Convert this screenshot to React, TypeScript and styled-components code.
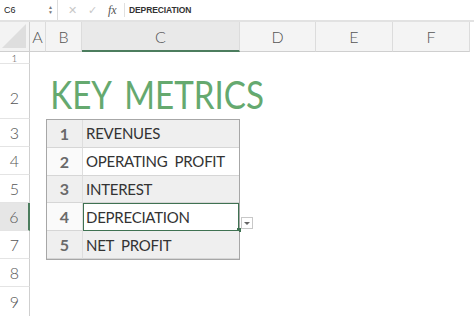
import React from 'react';
import styled, { createGlobalStyle } from 'styled-components';

const GlobalStyle = createGlobalStyle`
  html, body {
    margin: 0;
    padding: 0;
    background: #fff;
    overflow: hidden;
  }
  body {
    font-family: Lato, 'Liberation Sans', Arial, sans-serif;
  }
`;

const metrics = ['REVENUES', 'OPERATING  PROFIT', 'INTEREST', 'DEPRECIATION', 'NET  PROFIT'];
const columns = ['A', 'B', 'C', 'D', 'E', 'F'];
const rows = ['1', '2', '3', '4', '5', '6', '7', '8', '9'];

const Window = styled.div`
  width: 474px;
  height: 316px;
  overflow: hidden;
  background: #fff;
`;

const FormulaBar = styled.div`
  display: flex;
  align-items: center;
  height: 20px;
  border-bottom: 2px solid #e2e2e2;
  background: #fff;
  font-size: 10px;
  color: #222;
`;

const NameBox = styled.div`
  display: flex;
  align-items: center;
  justify-content: space-between;
  width: 49px;
  padding: 0 4px;
  height: 100%;
  border-right: 1px solid #dcdcdc;
  font-family: 'Liberation Sans', Arial, sans-serif;
  font-size: 9px;
`;

const Spinner = styled.div`
  display: flex;
  flex-direction: column;
  font-size: 5px;
  line-height: 5px;
  color: #777;
`;

const BarIcon = styled.span<{ $muted?: boolean }>`
  width: 20px;
  text-align: center;
  color: ${(p) => (p.$muted ? '#c8c8c8' : '#444')};
  font-size: 11px;
`;

const Fx = styled.span`
  width: 16px;
  padding-left: 6px;
  margin-right: 4px;
  font-family: 'Liberation Serif', 'Times New Roman', serif;
  font-style: italic;
  font-size: 12px;
  color: #555;
  border-right: 1px solid #e0e0e0;
  line-height: 14px;
`;

const FormulaText = styled.span`
  font-family: 'Liberation Sans', Arial, sans-serif;
  font-size: 8.5px;
  font-weight: 700;
  color: #333;
  letter-spacing: -0.1px;
`;

const Sheet = styled.div`
  display: grid;
  grid-template-columns: 30px 16px 36px 158px 76px 77px 77px;
  grid-template-rows: 30px 12px 55px 28px 28px 28px 28px 28px 28px 30px;
`;

const Corner = styled.div`
  position: relative;
  background: #f3f3f3;
  border-right: 1px solid #cfcfcf;
  border-bottom: 1px solid #cfcfcf;
  overflow: hidden;

  &::after {
    content: '';
    position: absolute;
    right: 3px;
    bottom: 3px;
    width: 0;
    height: 0;
    border-left: 24px solid transparent;
    border-bottom: 24px solid #dedede;
  }
`;

const ColHead = styled.div<{ $active?: boolean }>`
  display: flex;
  align-items: center;
  justify-content: center;
  background: ${(p) => (p.$active ? '#e9e9e9' : '#f4f4f4')};
  border-right: 1px solid #dcdcdc;
  border-bottom: ${(p) => (p.$active ? '2px solid #4c7d5e' : '1px solid #cfcfcf')};
  color: #555;
  font-size: 16px;
  font-weight: 300;
`;

const RowHead = styled.div<{ $active?: boolean; $short?: boolean; $tall?: boolean }>`
  grid-column: 1;
  display: flex;
  align-items: center;
  justify-content: center;
  box-sizing: border-box;
  background: ${(p) => (p.$active ? '#e6e6e6' : '#fff')};
  border-right: ${(p) => (p.$active ? '2px solid #4c7d5e' : '1px solid #cfcfcf')};
  border-bottom: 1px solid #e4e4e4;
  color: #555;
  font-size: ${(p) => (p.$short ? '10px' : '16px')};
  font-weight: 300;
  line-height: ${(p) => (p.$short ? '10px' : '18px')};
  padding-top: ${(p) => (p.$tall ? '14px' : '0')};
`;

const Title = styled.div`
  grid-column: 3 / 8;
  grid-row: 3;
  display: flex;
  align-items: flex-end;
  padding: 0 0 5px 5px;
  color: #65a96f;
  font-size: 39px;
  font-weight: 400;
  word-spacing: 6px;
  line-height: 40px;
  white-space: nowrap;
  transform: scaleX(0.85);
  transform-origin: left bottom;
`;

const Table = styled.div`
  grid-column: 3 / 5;
  grid-row: 4 / 9;
  display: grid;
  grid-template-columns: 36px 1fr;
  grid-auto-rows: 1fr;
  border: 1px solid #a7a7a7;
  margin-bottom: -1px;
`;

const NumCell = styled.div<{ $band: boolean }>`
  display: flex;
  align-items: center;
  justify-content: center;
  background: ${(p) => (p.$band ? '#efefef' : '#fafafa')};
  border-right: 1px solid #dedede;
  border-bottom: 1px solid #d6d6d6;
  color: #6a6a6a;
  font-size: 16px;
  font-weight: 700;
`;

const TextCell = styled.div<{ $band: boolean; $selected?: boolean }>`
  position: relative;
  display: flex;
  align-items: center;
  padding-left: 3px;
  background: ${(p) => (p.$band ? '#efefef' : '#fff')};
  border-bottom: 1px solid #d6d6d6;
  color: #333;
  font-size: 15px;
  letter-spacing: -0.25px;
  white-space: pre;
  outline: ${(p) => (p.$selected ? '1.5px solid #3f7252' : 'none')};
  outline-offset: -1px;
`;

const FillHandle = styled.span`
  position: absolute;
  right: -2px;
  bottom: -2px;
  width: 4px;
  height: 4px;
  background: #3f7252;
`;

const DropButton = styled.span`
  position: absolute;
  right: -14px;
  bottom: 1px;
  width: 10px;
  height: 10px;
  border: 1px solid #c8c8c8;
  background: #fff;
  display: flex;
  align-items: center;
  justify-content: center;

  &::after {
    content: '';
    border-left: 3px solid transparent;
    border-right: 3px solid transparent;
    border-top: 3px solid #666;
  }
`;

export default function App() {
  return (
    <Window>
      <GlobalStyle />
      <FormulaBar>
        <NameBox>
          <span>C6</span>
          <Spinner>
            <span>▲</span>
            <span>▼</span>
          </Spinner>
        </NameBox>
        <BarIcon $muted style={{ marginLeft: 4 }}>✕</BarIcon>
        <BarIcon $muted>✓</BarIcon>
        <Fx>fx</Fx>
        <FormulaText>DEPRECIATION</FormulaText>
      </FormulaBar>
      <Sheet>
        <Corner />
        {columns.map((c) => (
          <ColHead key={c} $active={c === 'C'}>
            {c}
          </ColHead>
        ))}
        {rows.map((r, i) => (
          <RowHead
            key={r}
            style={{ gridRow: i + 2 }}
            $active={r === '6'}
            $short={r === '1'}
            $tall={r === '2'}
          >
            {r}
          </RowHead>
        ))}
        <Title>KEY METRICS</Title>
        <Table>
          {metrics.map((m, i) => (
            <React.Fragment key={m}>
              <NumCell $band={i % 2 === 0}>{i + 1}</NumCell>
              <TextCell $band={i % 2 === 0} $selected={i === 3}>
                {m}
                {i === 3 && (
                  <>
                    <FillHandle />
                    <DropButton />
                  </>
                )}
              </TextCell>
            </React.Fragment>
          ))}
        </Table>
      </Sheet>
    </Window>
  );
}
